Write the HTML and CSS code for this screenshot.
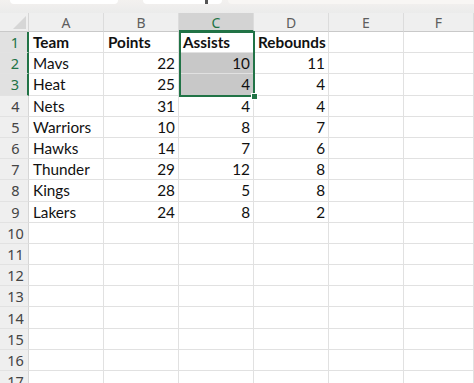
FILE: index.html
```html
<!DOCTYPE html>
<html>
<head>
<meta charset="utf-8">
<link rel="stylesheet" href="styles.css">
</head>
<body>
<div class="topbar">
  <div class="tab tab-a"></div>
  <div class="tab tab-b"><span class="mark"></span></div>
  <div class="tab tab-c"></div>
</div>
<div class="sheet">
  <div class="corner"><svg width="13" height="13" viewBox="0 0 13 13"><polygon points="13,0 13,13 0,13" fill="#d6d6d6"/></svg></div>
  <div class="ch">A</div><div class="ch">B</div><div class="ch ch-sel">C</div><div class="ch">D</div><div class="ch">E</div><div class="ch">F</div>

  <div class="rh rh-sel">1</div><div class="c b">Team</div><div class="c b">Points</div><div class="c b">Assists</div><div class="c b">Rebounds</div><div class="c"></div><div class="c"></div>
  <div class="rh rh-sel">2</div><div class="c">Mavs</div><div class="c n">22</div><div class="c n sel">10</div><div class="c n">11</div><div class="c"></div><div class="c"></div>
  <div class="rh rh-sel">3</div><div class="c">Heat</div><div class="c n">25</div><div class="c n sel">4</div><div class="c n">4</div><div class="c"></div><div class="c"></div>
  <div class="rh">4</div><div class="c">Nets</div><div class="c n">31</div><div class="c n">4</div><div class="c n">4</div><div class="c"></div><div class="c"></div>
  <div class="rh">5</div><div class="c">Warriors</div><div class="c n">10</div><div class="c n">8</div><div class="c n">7</div><div class="c"></div><div class="c"></div>
  <div class="rh">6</div><div class="c">Hawks</div><div class="c n">14</div><div class="c n">7</div><div class="c n">6</div><div class="c"></div><div class="c"></div>
  <div class="rh">7</div><div class="c">Thunder</div><div class="c n">29</div><div class="c n">12</div><div class="c n">8</div><div class="c"></div><div class="c"></div>
  <div class="rh">8</div><div class="c">Kings</div><div class="c n">28</div><div class="c n">5</div><div class="c n">8</div><div class="c"></div><div class="c"></div>
  <div class="rh">9</div><div class="c">Lakers</div><div class="c n">24</div><div class="c n">8</div><div class="c n">2</div><div class="c"></div><div class="c"></div>
  <div class="rh">10</div><div class="c"></div><div class="c"></div><div class="c"></div><div class="c"></div><div class="c"></div><div class="c"></div>
  <div class="rh">11</div><div class="c"></div><div class="c"></div><div class="c"></div><div class="c"></div><div class="c"></div><div class="c"></div>
  <div class="rh">12</div><div class="c"></div><div class="c"></div><div class="c"></div><div class="c"></div><div class="c"></div><div class="c"></div>
  <div class="rh">13</div><div class="c"></div><div class="c"></div><div class="c"></div><div class="c"></div><div class="c"></div><div class="c"></div>
  <div class="rh">14</div><div class="c"></div><div class="c"></div><div class="c"></div><div class="c"></div><div class="c"></div><div class="c"></div>
  <div class="rh">15</div><div class="c"></div><div class="c"></div><div class="c"></div><div class="c"></div><div class="c"></div><div class="c"></div>
  <div class="rh">16</div><div class="c"></div><div class="c"></div><div class="c"></div><div class="c"></div><div class="c"></div><div class="c"></div>
  <div class="rh">17</div><div class="c"></div><div class="c"></div><div class="c"></div><div class="c"></div><div class="c"></div><div class="c"></div>

  <div class="selection"><span class="handle"></span></div>
</div>
</body>
</html>
```
FILE: styles.css
```css
* { box-sizing: border-box; }
html, body { margin: 0; padding: 0; background: #ffffff; overflow: hidden; }
body { width: 474px; height: 383px; font-family: "Lato", "Liberation Sans", sans-serif; }

.topbar {
  height: 13px;
  display: flex;
  align-items: flex-start;
  background: linear-gradient(#f3f1ef, #ebebeb);
  padding-left: 10px;
}
.tab {
  height: 4px;
  background: #ffffff;
  border-radius: 0 0 5px 5px;
  position: relative;
}
.tab-a { width: 108px; }
.tab-b { width: 79px; margin-left: 25px; }
.tab-c { flex: 1; margin-left: 6px; border-radius: 0 0 0 5px; background: #f8f6f4; }
.mark {
  position: absolute;
  left: 62px;
  top: 0;
  width: 3px;
  height: 4px;
  background: #555;
}

.sheet {
  position: relative;
  display: grid;
  grid-template-columns: 29px repeat(5, 75px) 1fr;
  grid-template-rows: 19px;
  grid-auto-rows: 21.2px;
}

.corner {
  background: #efefef;
  border-bottom: 1px solid #c9c9c9;
  border-right: 1px solid #d6d6d6;
  display: flex;
  align-items: flex-end;
  justify-content: flex-end;
  padding: 0 2px 2px 0;
}

.ch {
  background: #efefef;
  border-bottom: 1px solid #c9c9c9;
  border-right: 1px solid #dcdcdc;
  display: flex;
  align-items: center;
  justify-content: center;
  font-family: "Noto Sans", "Open Sans", sans-serif;
  font-size: 14px;
  color: #5e5e5e;
  padding-top: 1px;
}
.ch-sel {
  background: #d3d3d3;
  border-bottom: 2px solid #217346;
  color: #217346;
}

.rh {
  background: #efefef;
  border-right: 1px solid #d6d6d6;
  border-bottom: 1px solid #e2e2e2;
  display: flex;
  align-items: center;
  justify-content: center;
  font-family: "Noto Sans", "Open Sans", sans-serif;
  font-size: 14.5px;
  color: #444444;
  padding-left: 3px;
}
.rh-sel {
  background: #e1e1e1;
  border-right: 2px solid #217346;
  color: #217346;
}

.c {
  border-right: 1px solid #e1e1e1;
  border-bottom: 1px solid #e1e1e1;
  display: flex;
  align-items: center;
  padding: 0 3px 0 4px;
  font-size: 15.3px;
  color: #111111;
  white-space: nowrap;
}
.b { font-weight: 700; }
.n { justify-content: flex-end; }
.sel { background: #c8c8c8; }

.selection {
  position: absolute;
  left: 179px;
  top: 18px;
  width: 76px;
  height: 66px;
  border: 2px solid #217346;
  pointer-events: none;
}
.handle {
  position: absolute;
  right: -4px;
  bottom: -4px;
  width: 5px;
  height: 5px;
  background: #217346;
  outline: 1px solid #ffffff;
}
```
